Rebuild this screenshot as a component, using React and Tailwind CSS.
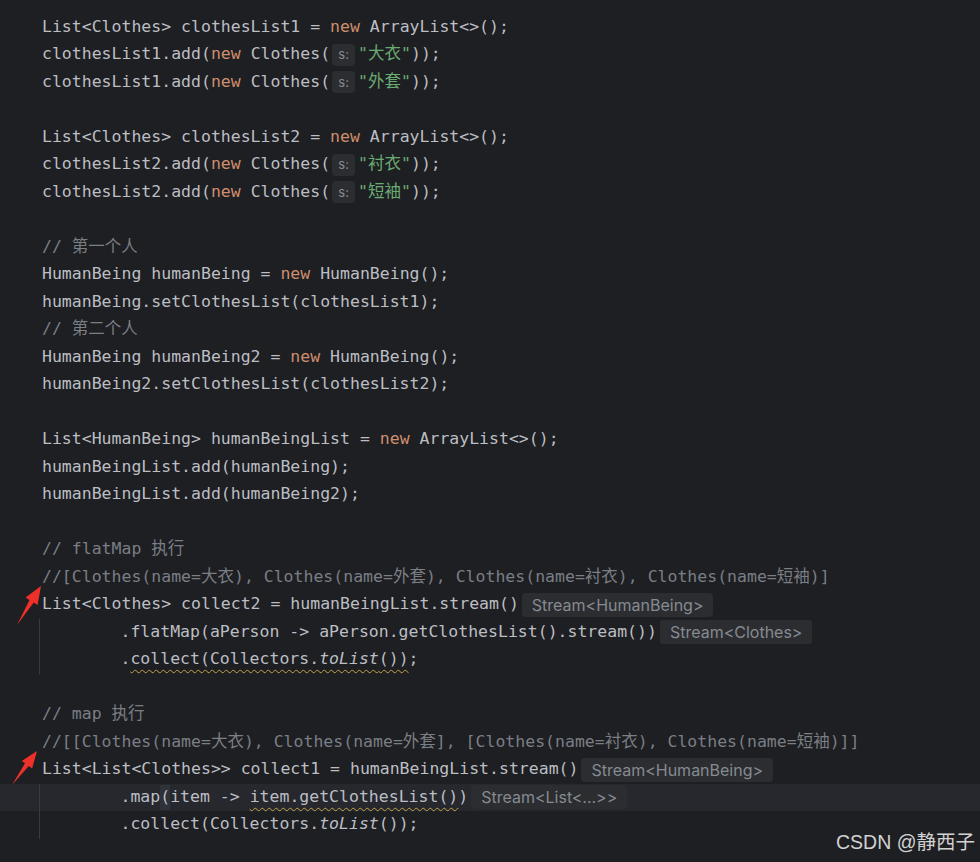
import React from "react";

const mono = { fontFamily: '"DejaVu Sans Mono", "Noto Sans CJK SC", monospace' };

// one editor row: gutter (with optional indent guide) + code
const Row = ({ guide, active, children }) => (
  <div className={`flex h-[27.5px] ${active ? "bg-[#26282e]" : ""}`}>
    <div className={`w-[40px] shrink-0 ${guide ? "border-r border-[#393b40]" : ""}`} />
    <div className={`flex items-center whitespace-pre ${guide ? "pl-[1px]" : "pl-[2px]"}`}>{children}</div>
  </div>
);

const K = ({ children }) => <span className="text-[#cf8e6d]">{children}</span>;
const Str = ({ children }) => <span className="text-[#6aab73]">{children}</span>;
const Cm = ({ children }) => <span className="text-[#7a7e85]">{children}</span>;
const It = ({ children }) => <span className="italic">{children}</span>;
const Wavy = ({ children }) => (
  <span className="underline decoration-wavy decoration-1 decoration-[#c3a54a] underline-offset-[5px]">{children}</span>
);

const Hint = ({ children }) => (
  <span
    className="ml-[3px] inline-flex h-[24px] items-center rounded-[4px] bg-[#2b2d30] px-[10px] text-[16px] text-[#868a91]"
    style={{ fontFamily: 'Inter, "Noto Sans", sans-serif' }}
  >
    {children}
  </span>
);

const SHint = () => (
  <span
    className="ml-[2px] mr-[3px] inline-flex h-[22px] w-[23px] items-center justify-center rounded-[4px] bg-[#2b2d30] text-[13px] text-[#868a91]"
    style={{ fontFamily: 'Inter, "Noto Sans", sans-serif' }}
  >
    s:
  </span>
);

const Blank = () => <div className="h-[27.5px]" />;

export default function App() {
  return (
    <div className="relative h-[862px] w-[980px] overflow-hidden bg-[#1e1f22] pt-[13.5px] text-[16.5px] text-[#bcbec4]" style={mono}>
      <Row>List&lt;Clothes&gt; clothesList1 = <K>new</K> ArrayList&lt;&gt;();</Row>
      <Row>clothesList1.add(<K>new</K> Clothes(<SHint /><Str>"大衣"</Str>));</Row>
      <Row>clothesList1.add(<K>new</K> Clothes(<SHint /><Str>"外套"</Str>));</Row>
      <Blank />
      <Row>List&lt;Clothes&gt; clothesList2 = <K>new</K> ArrayList&lt;&gt;();</Row>
      <Row>clothesList2.add(<K>new</K> Clothes(<SHint /><Str>"衬衣"</Str>));</Row>
      <Row>clothesList2.add(<K>new</K> Clothes(<SHint /><Str>"短袖"</Str>));</Row>
      <Blank />
      <Row><Cm>// 第一个人</Cm></Row>
      <Row>HumanBeing humanBeing = <K>new</K> HumanBeing();</Row>
      <Row>humanBeing.setClothesList(clothesList1);</Row>
      <Row><Cm>// 第二个人</Cm></Row>
      <Row>HumanBeing humanBeing2 = <K>new</K> HumanBeing();</Row>
      <Row>humanBeing2.setClothesList(clothesList2);</Row>
      <Blank />
      <Row>List&lt;HumanBeing&gt; humanBeingList = <K>new</K> ArrayList&lt;&gt;();</Row>
      <Row>humanBeingList.add(humanBeing);</Row>
      <Row>humanBeingList.add(humanBeing2);</Row>
      <Blank />
      <Row><Cm>// flatMap 执行</Cm></Row>
      <Row><Cm>//[Clothes(name=大衣), Clothes(name=外套), Clothes(name=衬衣), Clothes(name=短袖)]</Cm></Row>
      <Row>
        List&lt;Clothes&gt; collect2 = humanBeingList.stream()<Hint>Stream&lt;HumanBeing&gt;</Hint>
      </Row>
      <Row guide>
        {"        .flatMap(aPerson -> aPerson.getClothesList().stream())"}<Hint>Stream&lt;Clothes&gt;</Hint>
      </Row>
      <Row guide>
        {"        ."}<Wavy>collect(Collectors.<It>toList</It>())</Wavy>;
      </Row>
      <Blank />
      <Row><Cm>// map 执行</Cm></Row>
      <Row><Cm>//[[Clothes(name=大衣), Clothes(name=外套], [Clothes(name=衬衣), Clothes(name=短袖)]]</Cm></Row>
      <Row>
        List&lt;List&lt;Clothes&gt;&gt; collect1 = humanBeingList.stream()<Hint>Stream&lt;HumanBeing&gt;</Hint>
      </Row>
      <Row guide active>
        {"        .map"}<span className="bg-[#2f3238]">(</span>{"item -> "}<Wavy>item.getClothesList()</Wavy>)<Hint>Stream&lt;List&lt;...&gt;&gt;</Hint>
      </Row>
      <Row guide>
        {"        .collect(Collectors."}<It>toList</It>());
      </Row>

      {/* red annotation arrows */}
      <svg className="pointer-events-none absolute inset-0" width="980" height="862" viewBox="0 0 980 862">
        <polygon points="41,586 37.6,605 33.7,602.6 17,625 29.5,600 25.6,597.6" fill="#ee302b" />
        <polygon points="37,751 32.1,768.5 28.8,766.1 12,785 25,763.3 21.7,760.9" fill="#ee302b" />
      </svg>

      <div
        className="absolute bottom-[5px] right-[5px] text-[19.5px] text-[#d2d2d2]"
        style={{ fontFamily: '"Liberation Sans", "Noto Sans CJK SC", sans-serif' }}
      >
        CSDN @静西子
      </div>
    </div>
  );
}
